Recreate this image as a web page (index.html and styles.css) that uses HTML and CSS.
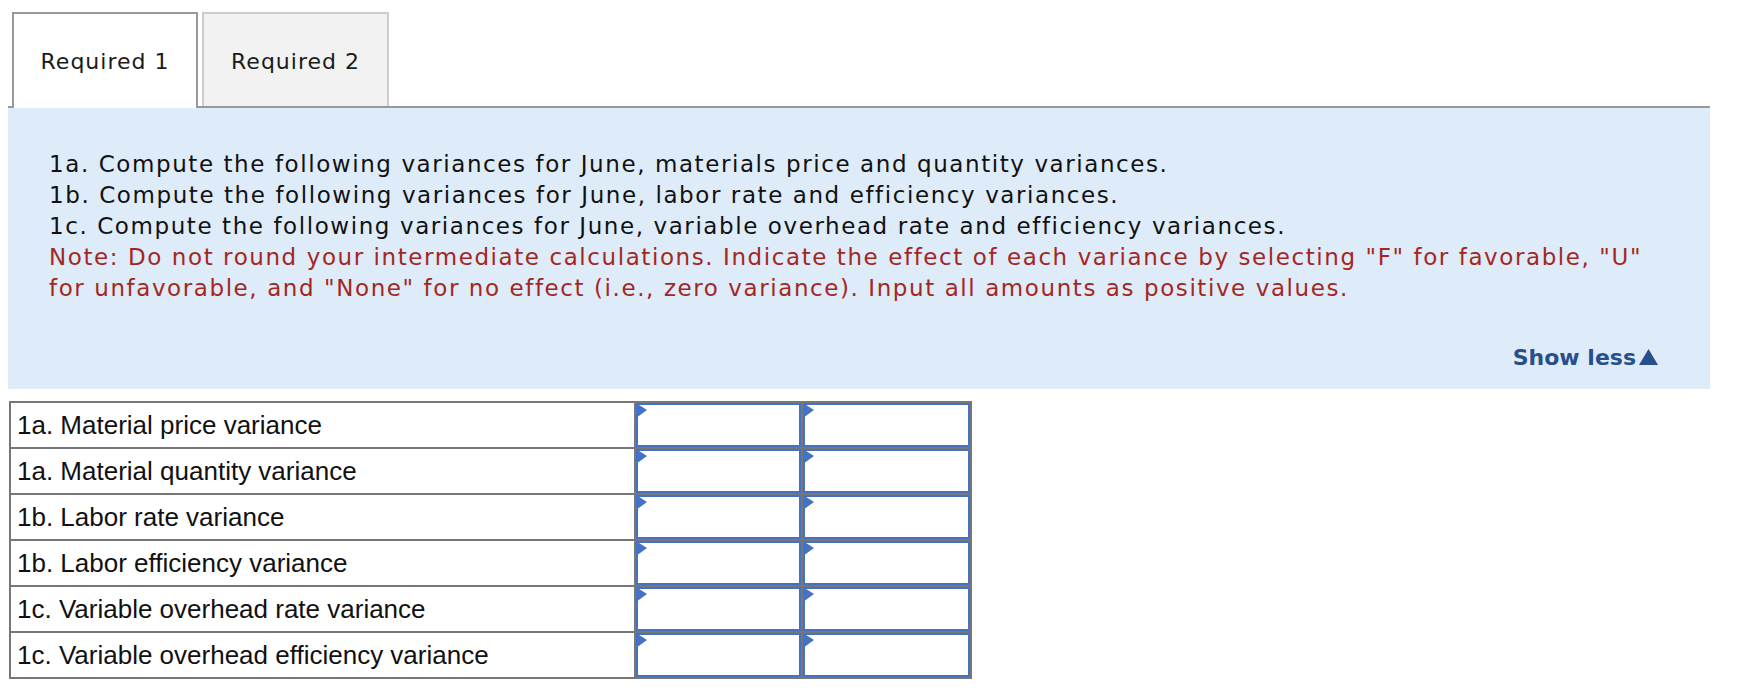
FILE: index.html
```html
<!DOCTYPE html>
<html>
<head>
<meta charset="utf-8">
<link rel="stylesheet" href="styles.css">
</head>
<body>
<div class="page">
  <div class="tabs">
    <div class="tab active">Required 1</div>
    <div class="tab">Required 2</div>
  </div>
  <div class="panel">
    <div class="instructions">
      <div>1a. Compute the following variances for June, materials price and quantity variances.</div>
      <div>1b. Compute the following variances for June, labor rate and efficiency variances.</div>
      <div>1c. Compute the following variances for June, variable overhead rate and efficiency variances.</div>
      <div class="note">Note: Do not round your intermediate calculations. Indicate the effect of each variance by selecting "F" for favorable, "U" for unfavorable, and "None" for no effect (i.e., zero variance). Input all amounts as positive values.</div>
    </div>
    <div class="show-row">
      <span class="show-less">Show less<svg class="tri" width="19" height="16" viewBox="0 0 19 16"><polygon points="9.5,0 19,16 0,16" fill="#264f8c"/></svg></span>
    </div>
  </div>
  <table class="grid">
    <colgroup>
      <col class="c-label"><col class="c-in"><col class="c-in2">
    </colgroup>
    <tbody>
      <tr><td class="label">1a. Material price variance</td><td class="inp"><div class="box"><span class="flag"></span></div></td><td class="inp"><div class="box"><span class="flag"></span></div></td></tr>
      <tr><td class="label">1a. Material quantity variance</td><td class="inp"><div class="box"><span class="flag"></span></div></td><td class="inp"><div class="box"><span class="flag"></span></div></td></tr>
      <tr><td class="label">1b. Labor rate variance</td><td class="inp"><div class="box"><span class="flag"></span></div></td><td class="inp"><div class="box"><span class="flag"></span></div></td></tr>
      <tr><td class="label">1b. Labor efficiency variance</td><td class="inp"><div class="box"><span class="flag"></span></div></td><td class="inp"><div class="box"><span class="flag"></span></div></td></tr>
      <tr><td class="label">1c. Variable overhead rate variance</td><td class="inp"><div class="box"><span class="flag"></span></div></td><td class="inp"><div class="box"><span class="flag"></span></div></td></tr>
      <tr><td class="label">1c. Variable overhead efficiency variance</td><td class="inp"><div class="box"><span class="flag"></span></div></td><td class="inp"><div class="box"><span class="flag"></span></div></td></tr>
    </tbody>
  </table>
</div>
</body>
</html>
```

FILE: styles.css
```css
html, body {
  margin: 0;
  padding: 0;
  background: #ffffff;
}
.page {
  margin-left: 8px;
  width: 1702px;
  font-family: "DejaVu Sans", Verdana, sans-serif;
}
.tabs {
  display: flex;
  align-items: flex-end;
  gap: 4px;
  padding-top: 12px;
  padding-left: 4px;
  border-bottom: 2px solid #999999;
  height: 94px;
}
.tab {
  box-sizing: border-box;
  width: 187px;
  height: 94px;
  border: 2px solid #cccccc;
  border-bottom: none;
  background: #f2f2f2;
  display: flex;
  align-items: center;
  justify-content: center;
  font-size: 22px;
  letter-spacing: 1px;
  color: #1a1a1a;
  padding-top: 2px;
}
.tab.active {
  width: 186px;
  height: 96px;
  margin-bottom: -2px;
  border-color: #999999;
  background: #ffffff;
  padding-top: 0;
}
.panel {
  background: #deebf8;
  padding: 41px 52px 16px 41px;
}
.instructions {
  font-size: 23px;
  letter-spacing: 1.58px;
  line-height: 31px;
  color: #111111;
}
.note {
  color: #a4271f;
}
.show-row {
  margin-top: 39px;
  display: flex;
  justify-content: flex-end;
  line-height: 30px;
}
.show-less {
  font-weight: bold;
  font-size: 22px;
  color: #264f8c;
  display: inline-flex;
  align-items: baseline;
}
.tri {
  margin-left: 3px;
}
.grid {
  margin-top: 12px;
  margin-left: 1px;
  border-collapse: collapse;
  table-layout: fixed;
  width: 961px;
  font-family: "Liberation Sans", Arial, sans-serif;
}
.c-label { width: 625px; }
.c-in { width: 167px; }
.c-in2 { width: 169px; }
.grid td {
  border: 2px solid #777777;
  height: 44px;
  padding: 0;
}
.label {
  font-size: 26px;
  color: #111111;
  padding-left: 6px !important;
  white-space: nowrap;
}
.inp {
  vertical-align: top;
}
.box {
  position: relative;
  box-sizing: border-box;
  height: 44px;
  border: 2px solid #4472c4;
  background: #ffffff;
}
.flag {
  position: absolute;
  top: -2px;
  left: -2px;
  width: 0;
  height: 0;
  border-left: 11px solid #4472c4;
  border-top: 7px solid transparent;
  border-bottom: 8px solid transparent;
}
```
